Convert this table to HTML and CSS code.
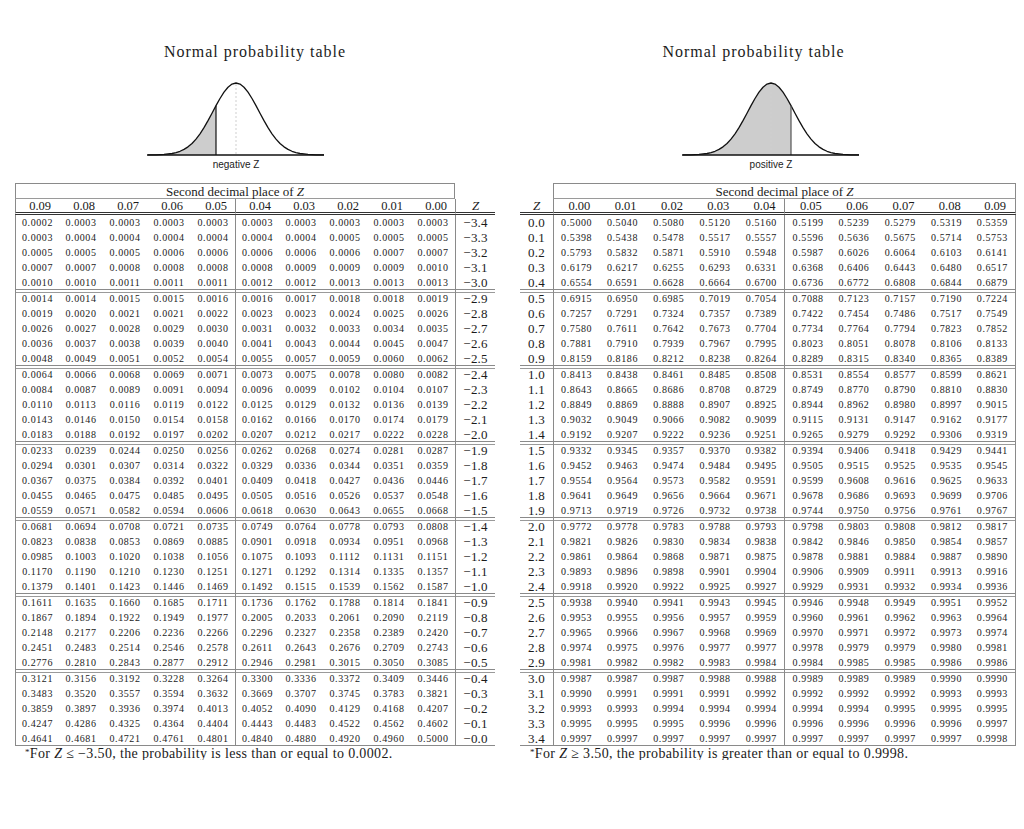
FILE: index.html
```html
<!DOCTYPE html>
<html>
<head>
<meta charset="utf-8">
<title>Normal probability table</title>
<link rel="stylesheet" href="styles.css">
</head>
<body>
<div class="page">
  <section class="panel panel-neg">
    <h1 class="title">Normal probability table</h1>
    <figure class="curve">
      <svg viewBox="0 0 180 76" width="180" height="76">
        <polygon class="shade" points="0,74 2,73.95 10,73.83 18,73.46 26,72.5 30,71.6 34,70.28 38,68.41 42,65.84 46,62.45 50,58.13 54,52.85 58,46.65 62,39.68 66,32.23 70,24.67 70,74"/>
        <line class="mid" x1="90" y1="3" x2="90" y2="74"/>
        <polyline class="bell" points="2,73.95 10,73.83 18,73.46 26,72.5 30,71.6 34,70.28 38,68.41 42,65.84 46,62.45 50,58.13 54,52.85 58,46.65 62,39.68 66,32.23 70,24.67 74,17.48 78,11.16 82,6.23 86,3.08 90,2 94,3.08 98,6.23 102,11.16 106,17.48 110,24.67 114,32.23 118,39.68 122,46.65 126,52.85 130,58.13 134,62.45 138,65.84 142,68.41 146,70.28 150,71.6 154,72.5 162,73.46 170,73.83 178,73.95"/>
        <line class="cut" x1="70" y1="24.67" x2="70" y2="74"/>
        <line class="base" x1="1" y1="74" x2="178" y2="74"/>
      </svg>
      <figcaption class="curve-label">negative Z</figcaption>
    </figure>
    <table class="ztable neg">
      <colgroup>
        <col class="c"><col class="c"><col class="c"><col class="c"><col class="c"><col class="c"><col class="c"><col class="c"><col class="c"><col class="c"><col class="zc">
      </colgroup>
      <thead>
        <tr class="h1"><th colspan="10" class="sdp">Second decimal place of <i>Z</i></th><th class="blank"></th></tr>
        <tr class="h2"><th>0.09</th><th>0.08</th><th>0.07</th><th>0.06</th><th>0.05</th><th>0.04</th><th>0.03</th><th>0.02</th><th>0.01</th><th>0.00</th><th class="zh"><i>Z</i></th></tr>
      </thead>
      <tbody>
        <tr><td>0.0002</td><td>0.0003</td><td>0.0003</td><td>0.0003</td><td>0.0003</td><td>0.0003</td><td>0.0003</td><td>0.0003</td><td>0.0003</td><td>0.0003</td><td class="z">−3.4</td></tr>
        <tr><td>0.0003</td><td>0.0004</td><td>0.0004</td><td>0.0004</td><td>0.0004</td><td>0.0004</td><td>0.0004</td><td>0.0005</td><td>0.0005</td><td>0.0005</td><td class="z">−3.3</td></tr>
        <tr><td>0.0005</td><td>0.0005</td><td>0.0005</td><td>0.0006</td><td>0.0006</td><td>0.0006</td><td>0.0006</td><td>0.0006</td><td>0.0007</td><td>0.0007</td><td class="z">−3.2</td></tr>
        <tr><td>0.0007</td><td>0.0007</td><td>0.0008</td><td>0.0008</td><td>0.0008</td><td>0.0008</td><td>0.0009</td><td>0.0009</td><td>0.0009</td><td>0.0010</td><td class="z">−3.1</td></tr>
        <tr><td>0.0010</td><td>0.0010</td><td>0.0011</td><td>0.0011</td><td>0.0011</td><td>0.0012</td><td>0.0012</td><td>0.0013</td><td>0.0013</td><td>0.0013</td><td class="z">−3.0</td></tr>
        <tr class="g"><td>0.0014</td><td>0.0014</td><td>0.0015</td><td>0.0015</td><td>0.0016</td><td>0.0016</td><td>0.0017</td><td>0.0018</td><td>0.0018</td><td>0.0019</td><td class="z">−2.9</td></tr>
        <tr><td>0.0019</td><td>0.0020</td><td>0.0021</td><td>0.0021</td><td>0.0022</td><td>0.0023</td><td>0.0023</td><td>0.0024</td><td>0.0025</td><td>0.0026</td><td class="z">−2.8</td></tr>
        <tr><td>0.0026</td><td>0.0027</td><td>0.0028</td><td>0.0029</td><td>0.0030</td><td>0.0031</td><td>0.0032</td><td>0.0033</td><td>0.0034</td><td>0.0035</td><td class="z">−2.7</td></tr>
        <tr><td>0.0036</td><td>0.0037</td><td>0.0038</td><td>0.0039</td><td>0.0040</td><td>0.0041</td><td>0.0043</td><td>0.0044</td><td>0.0045</td><td>0.0047</td><td class="z">−2.6</td></tr>
        <tr><td>0.0048</td><td>0.0049</td><td>0.0051</td><td>0.0052</td><td>0.0054</td><td>0.0055</td><td>0.0057</td><td>0.0059</td><td>0.0060</td><td>0.0062</td><td class="z">−2.5</td></tr>
        <tr class="g"><td>0.0064</td><td>0.0066</td><td>0.0068</td><td>0.0069</td><td>0.0071</td><td>0.0073</td><td>0.0075</td><td>0.0078</td><td>0.0080</td><td>0.0082</td><td class="z">−2.4</td></tr>
        <tr><td>0.0084</td><td>0.0087</td><td>0.0089</td><td>0.0091</td><td>0.0094</td><td>0.0096</td><td>0.0099</td><td>0.0102</td><td>0.0104</td><td>0.0107</td><td class="z">−2.3</td></tr>
        <tr><td>0.0110</td><td>0.0113</td><td>0.0116</td><td>0.0119</td><td>0.0122</td><td>0.0125</td><td>0.0129</td><td>0.0132</td><td>0.0136</td><td>0.0139</td><td class="z">−2.2</td></tr>
        <tr><td>0.0143</td><td>0.0146</td><td>0.0150</td><td>0.0154</td><td>0.0158</td><td>0.0162</td><td>0.0166</td><td>0.0170</td><td>0.0174</td><td>0.0179</td><td class="z">−2.1</td></tr>
        <tr><td>0.0183</td><td>0.0188</td><td>0.0192</td><td>0.0197</td><td>0.0202</td><td>0.0207</td><td>0.0212</td><td>0.0217</td><td>0.0222</td><td>0.0228</td><td class="z">−2.0</td></tr>
        <tr class="g"><td>0.0233</td><td>0.0239</td><td>0.0244</td><td>0.0250</td><td>0.0256</td><td>0.0262</td><td>0.0268</td><td>0.0274</td><td>0.0281</td><td>0.0287</td><td class="z">−1.9</td></tr>
        <tr><td>0.0294</td><td>0.0301</td><td>0.0307</td><td>0.0314</td><td>0.0322</td><td>0.0329</td><td>0.0336</td><td>0.0344</td><td>0.0351</td><td>0.0359</td><td class="z">−1.8</td></tr>
        <tr><td>0.0367</td><td>0.0375</td><td>0.0384</td><td>0.0392</td><td>0.0401</td><td>0.0409</td><td>0.0418</td><td>0.0427</td><td>0.0436</td><td>0.0446</td><td class="z">−1.7</td></tr>
        <tr><td>0.0455</td><td>0.0465</td><td>0.0475</td><td>0.0485</td><td>0.0495</td><td>0.0505</td><td>0.0516</td><td>0.0526</td><td>0.0537</td><td>0.0548</td><td class="z">−1.6</td></tr>
        <tr><td>0.0559</td><td>0.0571</td><td>0.0582</td><td>0.0594</td><td>0.0606</td><td>0.0618</td><td>0.0630</td><td>0.0643</td><td>0.0655</td><td>0.0668</td><td class="z">−1.5</td></tr>
        <tr class="g"><td>0.0681</td><td>0.0694</td><td>0.0708</td><td>0.0721</td><td>0.0735</td><td>0.0749</td><td>0.0764</td><td>0.0778</td><td>0.0793</td><td>0.0808</td><td class="z">−1.4</td></tr>
        <tr><td>0.0823</td><td>0.0838</td><td>0.0853</td><td>0.0869</td><td>0.0885</td><td>0.0901</td><td>0.0918</td><td>0.0934</td><td>0.0951</td><td>0.0968</td><td class="z">−1.3</td></tr>
        <tr><td>0.0985</td><td>0.1003</td><td>0.1020</td><td>0.1038</td><td>0.1056</td><td>0.1075</td><td>0.1093</td><td>0.1112</td><td>0.1131</td><td>0.1151</td><td class="z">−1.2</td></tr>
        <tr><td>0.1170</td><td>0.1190</td><td>0.1210</td><td>0.1230</td><td>0.1251</td><td>0.1271</td><td>0.1292</td><td>0.1314</td><td>0.1335</td><td>0.1357</td><td class="z">−1.1</td></tr>
        <tr><td>0.1379</td><td>0.1401</td><td>0.1423</td><td>0.1446</td><td>0.1469</td><td>0.1492</td><td>0.1515</td><td>0.1539</td><td>0.1562</td><td>0.1587</td><td class="z">−1.0</td></tr>
        <tr class="g"><td>0.1611</td><td>0.1635</td><td>0.1660</td><td>0.1685</td><td>0.1711</td><td>0.1736</td><td>0.1762</td><td>0.1788</td><td>0.1814</td><td>0.1841</td><td class="z">−0.9</td></tr>
        <tr><td>0.1867</td><td>0.1894</td><td>0.1922</td><td>0.1949</td><td>0.1977</td><td>0.2005</td><td>0.2033</td><td>0.2061</td><td>0.2090</td><td>0.2119</td><td class="z">−0.8</td></tr>
        <tr><td>0.2148</td><td>0.2177</td><td>0.2206</td><td>0.2236</td><td>0.2266</td><td>0.2296</td><td>0.2327</td><td>0.2358</td><td>0.2389</td><td>0.2420</td><td class="z">−0.7</td></tr>
        <tr><td>0.2451</td><td>0.2483</td><td>0.2514</td><td>0.2546</td><td>0.2578</td><td>0.2611</td><td>0.2643</td><td>0.2676</td><td>0.2709</td><td>0.2743</td><td class="z">−0.6</td></tr>
        <tr><td>0.2776</td><td>0.2810</td><td>0.2843</td><td>0.2877</td><td>0.2912</td><td>0.2946</td><td>0.2981</td><td>0.3015</td><td>0.3050</td><td>0.3085</td><td class="z">−0.5</td></tr>
        <tr class="g"><td>0.3121</td><td>0.3156</td><td>0.3192</td><td>0.3228</td><td>0.3264</td><td>0.3300</td><td>0.3336</td><td>0.3372</td><td>0.3409</td><td>0.3446</td><td class="z">−0.4</td></tr>
        <tr><td>0.3483</td><td>0.3520</td><td>0.3557</td><td>0.3594</td><td>0.3632</td><td>0.3669</td><td>0.3707</td><td>0.3745</td><td>0.3783</td><td>0.3821</td><td class="z">−0.3</td></tr>
        <tr><td>0.3859</td><td>0.3897</td><td>0.3936</td><td>0.3974</td><td>0.4013</td><td>0.4052</td><td>0.4090</td><td>0.4129</td><td>0.4168</td><td>0.4207</td><td class="z">−0.2</td></tr>
        <tr><td>0.4247</td><td>0.4286</td><td>0.4325</td><td>0.4364</td><td>0.4404</td><td>0.4443</td><td>0.4483</td><td>0.4522</td><td>0.4562</td><td>0.4602</td><td class="z">−0.1</td></tr>
        <tr class="last"><td>0.4641</td><td>0.4681</td><td>0.4721</td><td>0.4761</td><td>0.4801</td><td>0.4840</td><td>0.4880</td><td>0.4920</td><td>0.4960</td><td>0.5000</td><td class="z">−0.0</td></tr>
      </tbody>
    </table>
    <p class="note"><span class="star">*</span>For <i>Z</i> ≤ −3.50, the probability is less than or equal to 0.0002.</p>
  </section>

  <section class="panel panel-pos">
    <h1 class="title">Normal probability table</h1>
    <figure class="curve">
      <svg viewBox="0 0 180 76" width="180" height="76">
        <polygon class="shade" points="0,74 2,73.95 10,73.83 18,73.46 26,72.5 30,71.6 34,70.28 38,68.41 42,65.84 46,62.45 50,58.13 54,52.85 58,46.65 62,39.68 66,32.23 70,24.67 74,17.48 78,11.16 82,6.23 86,3.08 90,2 94,3.08 98,6.23 102,11.16 106,17.48 110,24.67 110,74"/>
        <line class="mid" x1="90" y1="3" x2="90" y2="74"/>
        <polyline class="bell" points="2,73.95 10,73.83 18,73.46 26,72.5 30,71.6 34,70.28 38,68.41 42,65.84 46,62.45 50,58.13 54,52.85 58,46.65 62,39.68 66,32.23 70,24.67 74,17.48 78,11.16 82,6.23 86,3.08 90,2 94,3.08 98,6.23 102,11.16 106,17.48 110,24.67 114,32.23 118,39.68 122,46.65 126,52.85 130,58.13 134,62.45 138,65.84 142,68.41 146,70.28 150,71.6 154,72.5 162,73.46 170,73.83 178,73.95"/>
        <line class="cut cut-pos" x1="110" y1="24.67" x2="110" y2="74"/>
        <line class="base" x1="1" y1="74" x2="178" y2="74"/>
      </svg>
      <figcaption class="curve-label">positive Z</figcaption>
    </figure>
    <table class="ztable pos">
      <colgroup>
        <col class="zc"><col class="c"><col class="c"><col class="c"><col class="c"><col class="c"><col class="c"><col class="c"><col class="c"><col class="c"><col class="c">
      </colgroup>
      <thead>
        <tr class="h1"><th class="blank"></th><th colspan="10" class="sdp">Second decimal place of <i>Z</i></th></tr>
        <tr class="h2"><th class="zh"><i>Z</i></th><th>0.00</th><th>0.01</th><th>0.02</th><th>0.03</th><th>0.04</th><th>0.05</th><th>0.06</th><th>0.07</th><th>0.08</th><th>0.09</th></tr>
      </thead>
      <tbody>
        <tr><td class="z">0.0</td><td>0.5000</td><td>0.5040</td><td>0.5080</td><td>0.5120</td><td>0.5160</td><td>0.5199</td><td>0.5239</td><td>0.5279</td><td>0.5319</td><td>0.5359</td></tr>
        <tr><td class="z">0.1</td><td>0.5398</td><td>0.5438</td><td>0.5478</td><td>0.5517</td><td>0.5557</td><td>0.5596</td><td>0.5636</td><td>0.5675</td><td>0.5714</td><td>0.5753</td></tr>
        <tr><td class="z">0.2</td><td>0.5793</td><td>0.5832</td><td>0.5871</td><td>0.5910</td><td>0.5948</td><td>0.5987</td><td>0.6026</td><td>0.6064</td><td>0.6103</td><td>0.6141</td></tr>
        <tr><td class="z">0.3</td><td>0.6179</td><td>0.6217</td><td>0.6255</td><td>0.6293</td><td>0.6331</td><td>0.6368</td><td>0.6406</td><td>0.6443</td><td>0.6480</td><td>0.6517</td></tr>
        <tr><td class="z">0.4</td><td>0.6554</td><td>0.6591</td><td>0.6628</td><td>0.6664</td><td>0.6700</td><td>0.6736</td><td>0.6772</td><td>0.6808</td><td>0.6844</td><td>0.6879</td></tr>
        <tr class="g"><td class="z">0.5</td><td>0.6915</td><td>0.6950</td><td>0.6985</td><td>0.7019</td><td>0.7054</td><td>0.7088</td><td>0.7123</td><td>0.7157</td><td>0.7190</td><td>0.7224</td></tr>
        <tr><td class="z">0.6</td><td>0.7257</td><td>0.7291</td><td>0.7324</td><td>0.7357</td><td>0.7389</td><td>0.7422</td><td>0.7454</td><td>0.7486</td><td>0.7517</td><td>0.7549</td></tr>
        <tr><td class="z">0.7</td><td>0.7580</td><td>0.7611</td><td>0.7642</td><td>0.7673</td><td>0.7704</td><td>0.7734</td><td>0.7764</td><td>0.7794</td><td>0.7823</td><td>0.7852</td></tr>
        <tr><td class="z">0.8</td><td>0.7881</td><td>0.7910</td><td>0.7939</td><td>0.7967</td><td>0.7995</td><td>0.8023</td><td>0.8051</td><td>0.8078</td><td>0.8106</td><td>0.8133</td></tr>
        <tr><td class="z">0.9</td><td>0.8159</td><td>0.8186</td><td>0.8212</td><td>0.8238</td><td>0.8264</td><td>0.8289</td><td>0.8315</td><td>0.8340</td><td>0.8365</td><td>0.8389</td></tr>
        <tr class="g"><td class="z">1.0</td><td>0.8413</td><td>0.8438</td><td>0.8461</td><td>0.8485</td><td>0.8508</td><td>0.8531</td><td>0.8554</td><td>0.8577</td><td>0.8599</td><td>0.8621</td></tr>
        <tr><td class="z">1.1</td><td>0.8643</td><td>0.8665</td><td>0.8686</td><td>0.8708</td><td>0.8729</td><td>0.8749</td><td>0.8770</td><td>0.8790</td><td>0.8810</td><td>0.8830</td></tr>
        <tr><td class="z">1.2</td><td>0.8849</td><td>0.8869</td><td>0.8888</td><td>0.8907</td><td>0.8925</td><td>0.8944</td><td>0.8962</td><td>0.8980</td><td>0.8997</td><td>0.9015</td></tr>
        <tr><td class="z">1.3</td><td>0.9032</td><td>0.9049</td><td>0.9066</td><td>0.9082</td><td>0.9099</td><td>0.9115</td><td>0.9131</td><td>0.9147</td><td>0.9162</td><td>0.9177</td></tr>
        <tr><td class="z">1.4</td><td>0.9192</td><td>0.9207</td><td>0.9222</td><td>0.9236</td><td>0.9251</td><td>0.9265</td><td>0.9279</td><td>0.9292</td><td>0.9306</td><td>0.9319</td></tr>
        <tr class="g"><td class="z">1.5</td><td>0.9332</td><td>0.9345</td><td>0.9357</td><td>0.9370</td><td>0.9382</td><td>0.9394</td><td>0.9406</td><td>0.9418</td><td>0.9429</td><td>0.9441</td></tr>
        <tr><td class="z">1.6</td><td>0.9452</td><td>0.9463</td><td>0.9474</td><td>0.9484</td><td>0.9495</td><td>0.9505</td><td>0.9515</td><td>0.9525</td><td>0.9535</td><td>0.9545</td></tr>
        <tr><td class="z">1.7</td><td>0.9554</td><td>0.9564</td><td>0.9573</td><td>0.9582</td><td>0.9591</td><td>0.9599</td><td>0.9608</td><td>0.9616</td><td>0.9625</td><td>0.9633</td></tr>
        <tr><td class="z">1.8</td><td>0.9641</td><td>0.9649</td><td>0.9656</td><td>0.9664</td><td>0.9671</td><td>0.9678</td><td>0.9686</td><td>0.9693</td><td>0.9699</td><td>0.9706</td></tr>
        <tr><td class="z">1.9</td><td>0.9713</td><td>0.9719</td><td>0.9726</td><td>0.9732</td><td>0.9738</td><td>0.9744</td><td>0.9750</td><td>0.9756</td><td>0.9761</td><td>0.9767</td></tr>
        <tr class="g"><td class="z">2.0</td><td>0.9772</td><td>0.9778</td><td>0.9783</td><td>0.9788</td><td>0.9793</td><td>0.9798</td><td>0.9803</td><td>0.9808</td><td>0.9812</td><td>0.9817</td></tr>
        <tr><td class="z">2.1</td><td>0.9821</td><td>0.9826</td><td>0.9830</td><td>0.9834</td><td>0.9838</td><td>0.9842</td><td>0.9846</td><td>0.9850</td><td>0.9854</td><td>0.9857</td></tr>
        <tr><td class="z">2.2</td><td>0.9861</td><td>0.9864</td><td>0.9868</td><td>0.9871</td><td>0.9875</td><td>0.9878</td><td>0.9881</td><td>0.9884</td><td>0.9887</td><td>0.9890</td></tr>
        <tr><td class="z">2.3</td><td>0.9893</td><td>0.9896</td><td>0.9898</td><td>0.9901</td><td>0.9904</td><td>0.9906</td><td>0.9909</td><td>0.9911</td><td>0.9913</td><td>0.9916</td></tr>
        <tr><td class="z">2.4</td><td>0.9918</td><td>0.9920</td><td>0.9922</td><td>0.9925</td><td>0.9927</td><td>0.9929</td><td>0.9931</td><td>0.9932</td><td>0.9934</td><td>0.9936</td></tr>
        <tr class="g"><td class="z">2.5</td><td>0.9938</td><td>0.9940</td><td>0.9941</td><td>0.9943</td><td>0.9945</td><td>0.9946</td><td>0.9948</td><td>0.9949</td><td>0.9951</td><td>0.9952</td></tr>
        <tr><td class="z">2.6</td><td>0.9953</td><td>0.9955</td><td>0.9956</td><td>0.9957</td><td>0.9959</td><td>0.9960</td><td>0.9961</td><td>0.9962</td><td>0.9963</td><td>0.9964</td></tr>
        <tr><td class="z">2.7</td><td>0.9965</td><td>0.9966</td><td>0.9967</td><td>0.9968</td><td>0.9969</td><td>0.9970</td><td>0.9971</td><td>0.9972</td><td>0.9973</td><td>0.9974</td></tr>
        <tr><td class="z">2.8</td><td>0.9974</td><td>0.9975</td><td>0.9976</td><td>0.9977</td><td>0.9977</td><td>0.9978</td><td>0.9979</td><td>0.9979</td><td>0.9980</td><td>0.9981</td></tr>
        <tr><td class="z">2.9</td><td>0.9981</td><td>0.9982</td><td>0.9982</td><td>0.9983</td><td>0.9984</td><td>0.9984</td><td>0.9985</td><td>0.9985</td><td>0.9986</td><td>0.9986</td></tr>
        <tr class="g"><td class="z">3.0</td><td>0.9987</td><td>0.9987</td><td>0.9987</td><td>0.9988</td><td>0.9988</td><td>0.9989</td><td>0.9989</td><td>0.9989</td><td>0.9990</td><td>0.9990</td></tr>
        <tr><td class="z">3.1</td><td>0.9990</td><td>0.9991</td><td>0.9991</td><td>0.9991</td><td>0.9992</td><td>0.9992</td><td>0.9992</td><td>0.9992</td><td>0.9993</td><td>0.9993</td></tr>
        <tr><td class="z">3.2</td><td>0.9993</td><td>0.9993</td><td>0.9994</td><td>0.9994</td><td>0.9994</td><td>0.9994</td><td>0.9994</td><td>0.9995</td><td>0.9995</td><td>0.9995</td></tr>
        <tr><td class="z">3.3</td><td>0.9995</td><td>0.9995</td><td>0.9995</td><td>0.9996</td><td>0.9996</td><td>0.9996</td><td>0.9996</td><td>0.9996</td><td>0.9996</td><td>0.9997</td></tr>
        <tr class="last"><td class="z">3.4</td><td>0.9997</td><td>0.9997</td><td>0.9997</td><td>0.9997</td><td>0.9997</td><td>0.9997</td><td>0.9997</td><td>0.9997</td><td>0.9997</td><td>0.9998</td></tr>
      </tbody>
    </table>
    <p class="note"><span class="star">*</span>For <i>Z</i> ≥ 3.50, the probability is greater than or equal to 0.9998.</p>
  </section>
</div>
</body>
</html>
```
FILE: styles.css
```css
html, body {
  margin: 0;
  padding: 0;
  background: #ffffff;
}

body {
  color: #1b1b1b;
  font-family: "Liberation Serif", "Times New Roman", serif;
}

.page {
  display: flex;
  gap: 25px;
  padding: 41px 0 0 15px;
}

.panel-neg { width: 480px; }
.panel-pos { width: 496px; }

.title {
  margin: 0;
  font-size: 16px;
  font-weight: normal;
  line-height: 22px;
  letter-spacing: 1px;
  text-align: center;
}

.panel-pos .title { padding-right: 29px; }

.curve {
  margin: 18px 0 0 131px;
  width: 180px;
}

.panel-pos .curve { margin-left: 161px; }

.curve svg {
  display: block;
  width: 180px;
  height: 76px;
}

.shade { fill: #cdcdcd; stroke: none; }
.mid { stroke: #cfcfcf; stroke-width: 1; stroke-dasharray: 2 2; }
.bell { fill: none; stroke: #111; stroke-width: 1.3; stroke-linejoin: round; }
.cut { stroke: #111; stroke-width: 1.2; }
.cut-pos { stroke: #555; }
.base { stroke: #111; stroke-width: 1.6; }

.curve-label {
  margin: 2px 0 0;
  font-family: "Liberation Sans", Arial, sans-serif;
  font-size: 10px;
  line-height: 12px;
  text-align: center;
  color: #222;
}

.ztable {
  margin-top: 12px;
  border-collapse: separate;
  border-spacing: 0;
  table-layout: fixed;
}

.neg { width: 480px; }
.pos { width: 496px; }

.neg col.c { width: 44px; }
.neg col.zc { width: 40px; }
.pos col.c { width: 46.3px; }
.pos col.zc { width: 33px; }

.ztable th,
.ztable td {
  padding: 0;
  text-align: center;
  vertical-align: middle;
  white-space: nowrap;
}

.h1 th {
  height: 14px;
  font-weight: normal;
  font-size: 13px;
  line-height: 13px;
}

.sdp { border: 1px solid #8a8a8a; border-bottom-color: #9a9a9a; }

.h2 th {
  height: 13px;
  font-weight: normal;
  font-size: 12.5px;
  line-height: 12px;
  text-align: right;
  padding-right: 8px;
  border-bottom: 3px double #333;
}

.pos .h2 th { padding-right: 9px; }

.ztable .h2 th.zh {
  text-align: center;
  padding-right: 0;
  font-size: 13px;
}

.ztable tbody td {
  height: 15px;
  font-size: 10px;
  line-height: 12px;
  letter-spacing: 0.6px;
}

.ztable tbody tr.g td {
  height: 15px;
  padding-top: 1px;
  box-shadow: inset 0 2px 0 #ffffff, inset 0 3px 0 #9a9a9a;
}

.ztable tbody td.z {
  font-size: 13px;
  letter-spacing: 0.2px;
}

.ztable tbody tr:nth-child(5n) td {
  box-shadow: inset 0 -1px 0 #8a8a8a;
}

.ztable tr.last td {
  box-shadow: inset 0 -1px 0 #777;
}

.neg tbody td:nth-child(1),
.neg tbody td:nth-child(6),
.neg tbody td:nth-child(11),
.neg .h2 th:nth-child(1),
.neg .h2 th:nth-child(6),
.neg .h2 th:nth-child(11) {
  border-left: 1px solid #8a8a8a;
}

.pos tbody td:nth-child(2),
.pos tbody td:nth-child(7),
.pos .h2 th:nth-child(2),
.pos .h2 th:nth-child(7) {
  border-left: 1px solid #8a8a8a;
}

.pos tbody td:nth-child(11),
.pos .h2 th:nth-child(11) {
  border-right: 1px solid #8a8a8a;
}

.note {
  margin: 0;
  padding-left: 10px;
  font-size: 14px;
  line-height: 12px;
  letter-spacing: 0.35px;
  white-space: nowrap;
}

.star {
  font-size: 9px;
  vertical-align: 3px;
}
```
